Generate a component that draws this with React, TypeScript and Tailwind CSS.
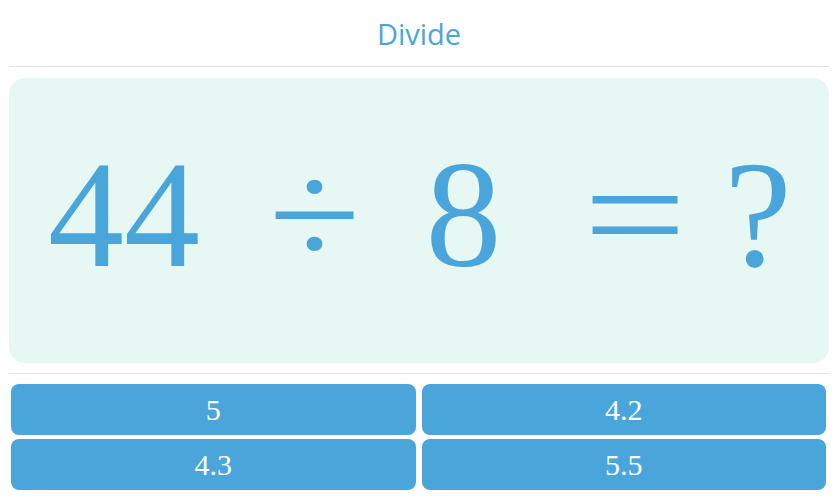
import React from 'react';

const answers = ['5', '4.2', '4.3', '5.5'];

export default function App() {
  return (
    <div className="min-h-screen bg-white">
      <div className="ml-[9px] w-[820px]">
        {/* Title */}
        <header className="h-[67px] flex items-center justify-center border-b border-[#e2e2e2]">
          <h1 className="text-[29px] text-[#4aa6da] font-['Open_Sans',sans-serif] leading-none">Divide</h1>
        </header>

        {/* Question card */}
        <div className="mt-[11px] h-[285px] rounded-[16px] bg-[#e6f7f4] pt-[61px] font-['Liberation_Serif',serif] text-[#4aa6da]">
          <div className="flex items-baseline text-[152px] leading-none">
            <span className="ml-[39px]">44</span>
            <span className="ml-[73px] scale-x-110">÷</span>
            <span className="ml-[69px]">8</span>
            <span className="ml-[91px] scale-x-[1.2]">=</span>
            <span className="ml-[46px]">?</span>
          </div>
        </div>

        {/* Answers */}
        <div className="mt-[10px] border-t border-[#e0e8e8] pt-[10px] pl-[2px] pr-[3px]">
          <div className="grid grid-cols-2 gap-x-[6px] gap-y-[4px]">
            {answers.map((a) => (
              <button
                key={a}
                type="button"
                className="h-[51px] rounded-[8px] bg-[#4aa6da] text-white text-[30px] font-['Liberation_Serif',serif] leading-none"
              >
                {a}
              </button>
            ))}
          </div>
        </div>
      </div>
    </div>
  );
}
